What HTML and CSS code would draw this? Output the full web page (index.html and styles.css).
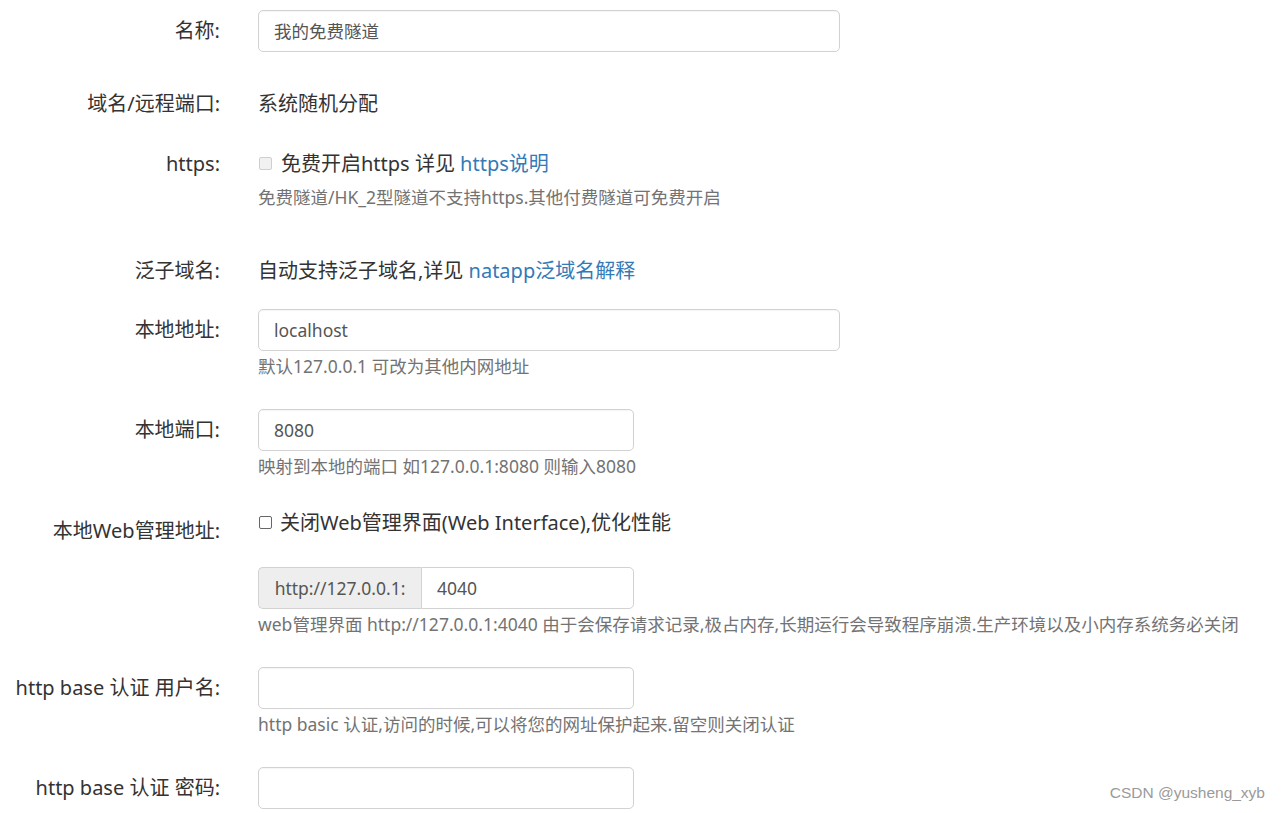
FILE: index.html
```html
<!DOCTYPE html>
<html lang="zh-CN">
<head>
<meta charset="utf-8">
<title>隧道配置</title>
<link rel="stylesheet" href="styles.css">
</head>
<body>
<form class="form">
  <div class="group g-name">
    <label class="lbl lbl-input">名称:</label>
    <div class="ctrl">
      <div class="input wide">我的免费隧道</div>
    </div>
  </div>

  <div class="group g-domain">
    <label class="lbl">域名/远程端口:</label>
    <div class="ctrl"><div class="static">系统随机分配</div></div>
  </div>

  <div class="group g-https">
    <label class="lbl">https:</label>
    <div class="ctrl">
      <div class="check"><span class="box disabled"></span><span>免费开启https 详见 <a class="link">https说明</a></span></div>
      <div class="help help-check">免费隧道/HK_2型隧道不支持https.其他付费隧道可免费开启</div>
    </div>
  </div>

  <div class="group g-wild">
    <label class="lbl">泛子域名:</label>
    <div class="ctrl"><div class="static">自动支持泛子域名,详见 <a class="link">natapp泛域名解释</a></div></div>
  </div>

  <div class="group g-local">
    <label class="lbl lbl-input">本地地址:</label>
    <div class="ctrl">
      <div class="input wide">localhost</div>
      <div class="help">默认127.0.0.1 可改为其他内网地址</div>
    </div>
  </div>

  <div class="group g-port">
    <label class="lbl lbl-input">本地端口:</label>
    <div class="ctrl">
      <div class="input short">8080</div>
      <div class="help">映射到本地的端口 如127.0.0.1:8080 则输入8080</div>
    </div>
  </div>

  <div class="group g-web">
    <label class="lbl lbl-web">本地Web管理地址:</label>
    <div class="ctrl">
      <div class="check"><span class="box"></span><span>关闭Web管理界面(Web Interface),优化性能</span></div>
      <div class="input-group">
        <span class="addon">http://127.0.0.1:</span>
        <span class="ig-input">4040</span>
      </div>
      <div class="help nowrap">web管理界面 http://127.0.0.1:4040 由于会保存请求记录,极占内存,长期运行会导致程序崩溃.生产环境以及小内存系统务必关闭</div>
    </div>
  </div>

  <div class="group g-user">
    <label class="lbl lbl-input">http base 认证 用户名:</label>
    <div class="ctrl">
      <div class="input short"></div>
      <div class="help">http basic 认证,访问的时候,可以将您的网址保护起来.留空则关闭认证</div>
    </div>
  </div>

  <div class="group g-pass">
    <label class="lbl lbl-input">http base 认证 密码:</label>
    <div class="ctrl">
      <div class="input short"></div>
    </div>
  </div>
</form>
<div class="watermark">CSDN @yusheng_xyb</div>
</body>
</html>
```

FILE: styles.css
```css
html, body {
  margin: 0;
  padding: 0;
  background: #fff;
}
body {
  font-family: "Noto Sans", "Noto Sans CJK SC", sans-serif;
  font-size: 17.5px;
  line-height: 25px;
  color: #333;
  width: 1281px;
  height: 813px;
  overflow: hidden;
  position: relative;
}
.form {
  padding-top: 10px;
}
.group {
  display: flex;
  align-items: flex-start;
}
.lbl {
  flex: none;
  width: 220px;
  text-align: right;
  font-size: 20px;
  line-height: 25px;
  white-space: nowrap;
  color: #333;
}
.lbl-input { padding-top: 8px; }
.lbl-web { padding-top: 8px; }
.ctrl {
  margin-left: 38px;
  flex: 1;
  min-width: 0;
}
.static {
  font-size: 20px;
  line-height: 25px;
}
.link { color: #337ab7; text-decoration: none; }

.input {
  box-sizing: border-box;
  height: 42px;
  border: 1px solid #d2d2d2;
  border-radius: 5px;
  padding: 0 15px;
  line-height: 40px;
  color: #555;
  box-shadow: inset 0 1px 1px rgba(0,0,0,0.04);
}
.wide { width: 582px; }
.short { width: 376px; }

.check {
  display: flex;
  align-items: center;
  font-size: 20px;
  line-height: 25px;
}
.box {
  box-sizing: border-box;
  width: 13px;
  height: 13px;
  margin-left: 1px;
  margin-right: 8px;
  border: 1px solid #666;
  border-radius: 2px;
  background: #fff;
  flex: none;
}
.box.disabled {
  border-color: #cfcfcf;
  background: #f1f1f1;
  margin-right: 9px;
}

.help {
  color: #737373;
  margin-top: 2.5px;
  line-height: 25px;
  white-space: nowrap;
}
.help-check { margin-top: 9px; }

.input-group {
  display: flex;
  width: 376px;
  height: 42px;
  margin-top: 32.5px;
  box-sizing: border-box;
}
.addon {
  box-sizing: border-box;
  width: 163px;
  height: 42px;
  background: #eee;
  border: 1px solid #d2d2d2;
  border-right: none;
  border-radius: 5px 0 0 5px;
  color: #555;
  text-align: center;
  line-height: 40px;
}
.ig-input {
  box-sizing: border-box;
  flex: 1;
  height: 42px;
  border: 1px solid #d2d2d2;
  border-radius: 0 5px 5px 0;
  padding: 0 15px;
  line-height: 40px;
  color: #555;
}

.g-domain { margin-top: 38.5px; }
.g-https { margin-top: 35px; }
.g-wild { margin-top: 48px; }
.g-local { margin-top: 26.5px; }
.g-port { margin-top: 30.5px; }
.g-web { margin-top: 31px; }
.g-user { margin-top: 30.5px; }
.g-pass { margin-top: 30.5px; }
.g-name .lbl { padding-top: 7.5px; }

.watermark {
  position: absolute;
  right: 16px;
  top: 783px;
  font-family: "Liberation Sans", Arial, sans-serif;
  font-size: 15.5px;
  line-height: 20px;
  color: #9a9a9a;
}
```
